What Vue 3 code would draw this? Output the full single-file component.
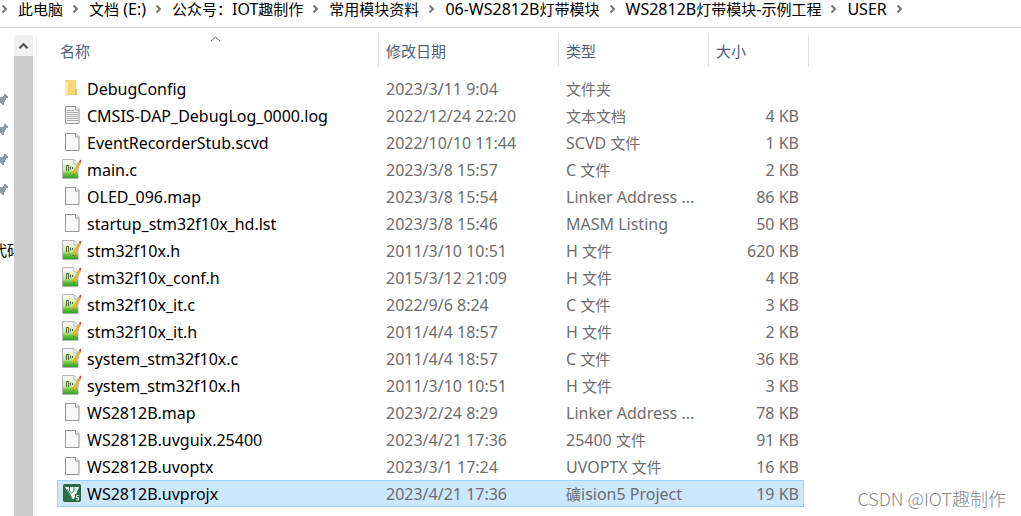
<script setup>
const crumbs = ['此电脑', '文档 (E:)', '公众号：IOT趣制作', '常用模块资料', '06-WS2812B灯带模块', 'WS2812B灯带模块-示例工程', 'USER']

const files = [
  { icon: 'folder', name: 'DebugConfig', date: '2023/3/11 9:04', type: '文件夹', size: '' },
  { icon: 'text', name: 'CMSIS-DAP_DebugLog_0000.log', date: '2022/12/24 22:20', type: '文本文档', size: '4 KB' },
  { icon: 'blank', name: 'EventRecorderStub.scvd', date: '2022/10/10 11:44', type: 'SCVD 文件', size: '1 KB' },
  { icon: 'code', name: 'main.c', date: '2023/3/8 15:57', type: 'C 文件', size: '2 KB' },
  { icon: 'blank', name: 'OLED_096.map', date: '2023/3/8 15:54', type: 'Linker Address ...', size: '86 KB' },
  { icon: 'blank', name: 'startup_stm32f10x_hd.lst', date: '2023/3/8 15:46', type: 'MASM Listing', size: '50 KB' },
  { icon: 'code', name: 'stm32f10x.h', date: '2011/3/10 10:51', type: 'H 文件', size: '620 KB' },
  { icon: 'code', name: 'stm32f10x_conf.h', date: '2015/3/12 21:09', type: 'H 文件', size: '4 KB' },
  { icon: 'code', name: 'stm32f10x_it.c', date: '2022/9/6 8:24', type: 'C 文件', size: '3 KB' },
  { icon: 'code', name: 'stm32f10x_it.h', date: '2011/4/4 18:57', type: 'H 文件', size: '2 KB' },
  { icon: 'code', name: 'system_stm32f10x.c', date: '2011/4/4 18:57', type: 'C 文件', size: '36 KB' },
  { icon: 'code', name: 'system_stm32f10x.h', date: '2011/3/10 10:51', type: 'H 文件', size: '3 KB' },
  { icon: 'blank', name: 'WS2812B.map', date: '2023/2/24 8:29', type: 'Linker Address ...', size: '78 KB' },
  { icon: 'blank', name: 'WS2812B.uvguix.25400', date: '2023/4/21 17:36', type: '25400 文件', size: '91 KB' },
  { icon: 'blank', name: 'WS2812B.uvoptx', date: '2023/3/1 17:24', type: 'UVOPTX 文件', size: '16 KB' },
  { icon: 'keil', name: 'WS2812B.uvprojx', date: '2023/4/21 17:36', type: '礦ision5 Project', size: '19 KB', selected: true },
]

// Splits a label into Chinese and Latin runs, which are set in different sizes.
const runs = (text) => text.match(/[\u2e80-\uffff]+|[^\u2e80-\uffff]+/g) || []
const isLatin = (run) => run.charCodeAt(0) < 0x2e80
</script>

<template>
  <div class="explorer">
    <nav class="path" aria-label="路径">
      <template v-for="crumb in crumbs" :key="crumb">
        <svg class="chevron" viewBox="0 0 9 10" aria-hidden="true"><path d="M2.5 1.5 6 5 2.5 8.5" /></svg>
        <button type="button" class="crumb"><span v-for="run in runs(crumb)" :key="run" :class="{ latin: isLatin(run) }">{{ run }}</span></button>
      </template>
      <svg class="chevron" viewBox="0 0 9 10" aria-hidden="true"><path d="M2.5 1.5 6 5 2.5 8.5" /></svg>
    </nav>

    <div class="content">
      <aside class="tree">
        <div v-for="n in 4" :key="n" class="tree-row">
          <svg class="pin" viewBox="0 0 14 12" aria-hidden="true">
            <path d="M9 0h2v1h1v1h1v2h-2v2h-1v2h-1v3H7v-1H6V9H4v1H3v1H0V9h1V8h1V6H1V4h4V3h3V2h1Z" />
          </svg>
        </div>
        <div class="tree-row"></div>
        <a href="#" class="tree-row">代码</a>
      </aside>

      <div class="scrollbar">
        <button type="button" class="scroll-up" aria-label="向上滚动">
          <svg viewBox="0 0 11 8" aria-hidden="true"><path d="M1.5 6.2 5.5 2.2 9.5 6.2" /></svg>
        </button>
        <div class="thumb"></div>
      </div>

      <main class="list">
        <table>
          <colgroup>
            <col class="c-name"><col class="c-date"><col class="c-type"><col class="c-size">
          </colgroup>
          <thead>
            <tr>
              <th scope="col">
                <div class="head first">名称
                  <svg class="sort" viewBox="0 0 11 6" aria-hidden="true"><path d="M1 5 5.5 1 10 5" /></svg>
                </div>
              </th>
              <th scope="col"><div class="head">修改日期</div></th>
              <th scope="col"><div class="head">类型</div></th>
              <th scope="col"><div class="head last">大小</div></th>
            </tr>
          </thead>
          <tbody>
            <tr v-for="file in files" :key="file.name" :class="{ selected: file.selected }">
              <td>
                <div class="file">
                  <svg v-if="file.icon === 'folder'" class="icon" viewBox="0 0 20 20" aria-hidden="true">
                    <path d="M3 2h8v15H3z" fill="#f3cf68" />
                    <path d="M7 2h7v9h1v6H6z" fill="#f8d775" />
                    <path d="M3 2l3 2v15l-3-2z" fill="#ffe9a2" />
                    <path d="M13 11h2v6h-2z" fill="#e8bd51" />
                  </svg>
                  <svg v-else-if="file.icon === 'text' || file.icon === 'blank'" class="icon" viewBox="0 0 20 20" aria-hidden="true">
                    <path d="M3.5 1.5H14l3 3v14H3.5z" fill="#f8f8f8" stroke="#949494" />
                    <path d="M13.5 1.5V5H17" fill="#fff" stroke="#949494" />
                    <path v-if="file.icon === 'text'" d="M5 5.5h7M5 7.5h11M5 9.5h11M5 11.5h11M5 13.5h11M5 15.5h11" fill="none" stroke="#aaa" />
                  </svg>
                  <svg v-else-if="file.icon === 'code'" class="icon" viewBox="0 0 20 20" aria-hidden="true">
                    <defs>
                      <linearGradient id="leaf" x1="0" y1="0" x2="0" y2="1">
                        <stop offset="0" stop-color="#f0f8dc" />
                        <stop offset=".5" stop-color="#c3e68c" />
                        <stop offset=".72" stop-color="#6cc63c" />
                        <stop offset="1" stop-color="#2c9f2a" />
                      </linearGradient>
                    </defs>
                    <path d="M.5.5H12l4 4v15H.5z" fill="#f4f4f4" stroke="#b4b4b4" />
                    <path d="M1 4h15v15H1z" fill="url(#leaf)" />
                    <path d="M12 1v4h4" fill="#fff" stroke="#b4b4b4" />
                    <path d="M4.5 12V6.5h2V12M8.500 7.500v3M10.5 8v2" fill="none" stroke="#4a6244" />
                    <path d="M17 3l1.5 1-5 10-2.500 2v-3z" fill="#f0b43a" stroke="#c08a26" stroke-width=".5" />
                    <path d="M17 3l1-2.500 1.500 1-1 2.500z" fill="#b5474a" />
                    <path d="M11 14.500l1 1-1 .5z" fill="#333" />
                  </svg>
                  <svg v-else class="icon" viewBox="0 0 20 20" aria-hidden="true">
                    <rect x="1.5" y="1.5" width="17" height="17" rx="1" fill="#277044" stroke="#2f6045" />
                    <path d="M3 4h14l-5 12h-2z" fill="#eef5f0" />
                    <path d="M7.5 4v4l2 2 2.500-2V4M5 6l5 9" fill="none" stroke="#277044" stroke-width=".9" />
                    <path d="M13 11h5v7h-5z" fill="#277044" />
                    <path d="M17 12.500h-2.500v2h2v2.500h-2.500" fill="none" stroke="#e5efe8" />
                  </svg>
                  <span class="latin">{{ file.name }}</span>
                </div>
              </td>
              <td class="latin">{{ file.date }}</td>
              <td><span v-for="run in runs(file.type)" :key="run" :class="{ latin: isLatin(run) }">{{ run }}</span></td>
              <td class="size latin">{{ file.size }}</td>
            </tr>
          </tbody>
        </table>
      </main>
    </div>

    <div class="watermark">CSDN @IOT趣制作</div>
  </div>
</template>

<style>
body {
  margin: 0;
  background: #fff;
}
</style>

<style scoped>
.explorer {
  position: relative;
  display: flex;
  flex-direction: column;
  min-height: 100vh;
  overflow: hidden;
  font-family: "Noto Sans", "Noto Sans CJK SC", sans-serif;
  font-size: 15px;
  line-height: 20px;
  color: #000;
}

.latin {
  font-size: 16px;
}

.path {
  display: flex;
  align-items: center;
  height: 28px;
  padding-bottom: 10px;
  box-sizing: border-box;
  border-bottom: 1px solid #d9d9d9;
}

.chevron {
  flex: none;
  width: 9px;
  height: 10px;
  margin-right: 9px;
  fill: none;
  stroke: #777;
  stroke-width: 2;
}

.crumb {
  flex: none;
  margin: 0 8px 0 0;
  padding: 0;
  border: 0;
  background: none;
  font: inherit;
  line-height: 18px;
  color: inherit;
  white-space: pre;
}

.content {
  display: flex;
  flex: 1;
  padding-top: 7px;
}

.tree {
  width: 14px;
  flex: none;
  overflow: hidden;
  padding-top: 50px;
}

.tree-row {
  display: flex;
  align-items: center;
  justify-content: center;
  height: 30px;
  color: #000;
  text-decoration: none;
  white-space: nowrap;
}

.pin {
  flex: none;
  width: 14px;
  height: 12px;
  margin-right: 10px;
  fill: #8f9ba2;
}

.scrollbar {
  display: flex;
  flex-direction: column;
  flex: none;
  width: 19px;
  margin-right: 3px;
}

.scroll-up {
  display: flex;
  align-items: center;
  justify-content: center;
  height: 21px;
  padding: 0;
  border: 0;
  background: #f0f0f0;
}

.scroll-up svg {
  width: 11px;
  height: 8px;
  fill: none;
  stroke: #505050;
  stroke-width: 2;
}

.thumb {
  flex: 1;
  background: #cdcdcd;
}

.list {
  flex: 1;
  padding-left: 20px;
  border-left: 1px solid #f0f0f0;
}

table {
  width: 747px;
  table-layout: fixed;
  border-collapse: collapse;
}

.c-name { width: 322px; }
.c-date { width: 180px; }
.c-type { width: 150px; }
.c-size { width: 95px; }

th {
  padding: 0 0 8px;
  font-weight: 400;
  text-align: left;
  color: #4c607a;
}

.head {
  position: relative;
  height: 32px;
  padding-left: 7px;
  border-right: 1px solid #e2e2e2;
  line-height: 32px;
}

.first {
  padding-left: 3px;
}

.last {
  margin-right: -5px;
}

.sort {
  position: absolute;
  top: 1px;
  left: 50%;
  width: 11px;
  height: 6px;
  margin-left: -8px;
  fill: none;
  stroke: #6b6b6b;
}

td {
  height: 27px;
  padding: 0 5px 0 7px;
  color: #6d6d6d;
  white-space: pre;
}

td:first-child {
  padding-left: 5px;
  color: #000;
}

.file {
  display: flex;
  align-items: center;
  gap: 5px;
}

.icon {
  flex: none;
  width: 20px;
  height: 20px;
  margin-bottom: 2px;
}

.size {
  text-align: right;
}

.selected {
  background: #cce8ff;
  outline: 1px solid #99d1ff;
  outline-offset: -1px;
}

.watermark {
  position: absolute;
  right: 15px;
  bottom: 6px;
  font-family: "Noto Sans CJK SC", sans-serif;
  font-size: 18px;
  font-weight: 300;
  line-height: 24px;
  color: #8c8c8c;
}
</style>
